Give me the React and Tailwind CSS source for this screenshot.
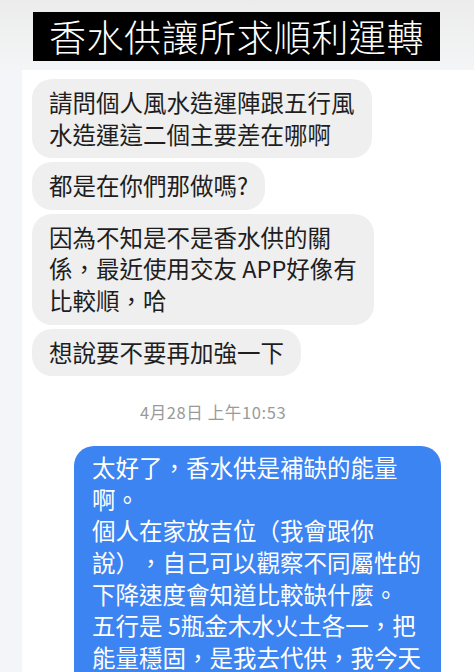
import React from 'react';

const font = "font-['Noto_Sans_CJK_TC','Noto_Sans_CJK_SC',sans-serif] [text-spacing-trim:space-all]";

const GrayBubble = ({ lines }) => (
  <div className="w-fit rounded-[20px] bg-[#efefef] px-[17px] py-[8px] text-[23.5px] leading-[31.6px] text-[#1e1e1e] whitespace-nowrap">
    {lines.map((l, i) => (
      <div key={i}>{l}</div>
    ))}
  </div>
);

export default function App() {
  return (
    <div className={`w-[474px] h-[672px] overflow-hidden bg-white ${font}`}>
      {/* title band */}
      <div className="h-[70px] bg-gradient-to-b from-[#ececec] to-[#f4f5f6] pt-[12px] pr-[4px]">
        <div className="ml-[33px] w-[407px] h-[49px] bg-black flex items-center justify-center text-white text-[37px] font-light tracking-[0.5px]">
          香水供讓所求順利運轉
        </div>
      </div>

      <div className="flex h-full">
        <div className="w-[22px] bg-[#f3f5f9]" />
        <div className="flex-1 pl-[10px] pt-[9px]">
          <div className="flex flex-col gap-[4px]">
            <GrayBubble lines={['請問個人風水造運陣跟五行風', '水造運這二個主要差在哪啊']} />
            <GrayBubble lines={['都是在你們那做嗎?']} />
            <GrayBubble lines={['因為不知是不是香水供的關', '係，最近使用交友 APP好像有', '比較順，哈']} />
            <GrayBubble lines={['想說要不要再加強一下']} />
          </div>

          <div className="mt-[26px] ml-[108px] text-[16.5px] leading-[20px] tracking-[0.6px] text-[#9a9a9a]">
            4月28日 上午10:53
          </div>

          <div className="mt-[24px] ml-[42px] w-[367px] rounded-t-[20px] bg-[#3c84f1] pl-[18px] pr-[10px] pt-[6px] pb-[20px] text-white text-[23.5px] leading-[31.6px] whitespace-nowrap">
            <div>太好了，香水供是補缺的能量</div>
            <div>啊。</div>
            <div>個人在家放吉位（我會跟你</div>
            <div>說），自己可以觀察不同屬性的</div>
            <div>下降速度會知道比較缺什麼。</div>
            <div>五行是 5瓶金木水火土各一，把</div>
            <div>
              能量穩固，是我去代供，我<span className="underline underline-offset-[5px]">今天</span>
            </div>
            <div>去大廟走一趟，再去拜拜</div>
          </div>
        </div>
      </div>
    </div>
  );
}
